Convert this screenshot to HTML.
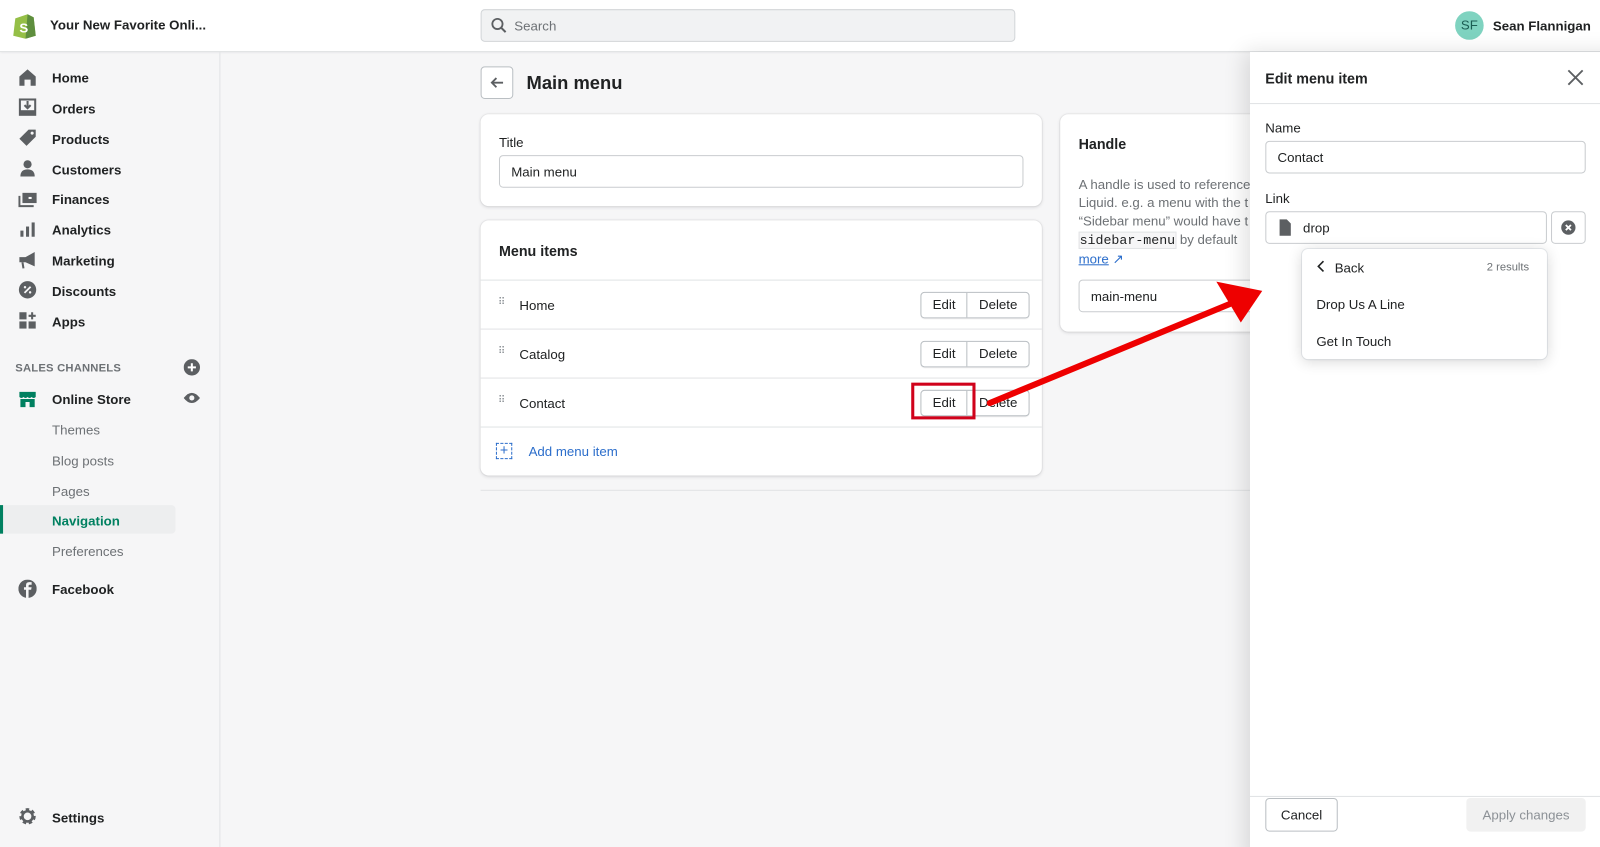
<!DOCTYPE html>
<html><head><meta charset="utf-8"><style>
*{box-sizing:border-box;margin:0;padding:0}
body{width:1600px;height:846px;overflow:hidden;background:#f6f6f7;font-family:"Liberation Sans",sans-serif;color:#202223;font-size:13px;position:relative}
#w{position:absolute;left:0;top:0;width:1568px;height:830px;transform:scale(1.020408);transform-origin:0 0;overflow:hidden}
.a{position:absolute}
.top{left:0;top:0;width:1568px;height:51px;background:#fff;border-bottom:1px solid #e1e3e5;box-shadow:0 1px 2px rgba(0,0,0,.08)}
.side{left:0;top:51px;width:216px;height:795px;border-right:1px solid #e1e3e5}
.nav{left:51px;font-size:13px;font-weight:bold;color:#202223}
.sub{left:51px;font-size:13px;color:#6d7175}
.ic{left:18px;width:18px;height:18px}
.card{background:#fff;border-radius:8px;box-shadow:0 0 0 1px rgba(63,63,68,.05),0 1px 3px rgba(63,63,68,.15)}
.inp{border:1px solid #c9cccf;border-radius:4px;background:#fff;padding-left:11px;display:flex;align-items:center;font-size:13px}
.btn{border:1px solid #babfc3;border-radius:4px;background:#fff;height:26px;display:flex;font-size:13px;box-shadow:0 1px 0 rgba(0,0,0,.05)}
.btn span{padding:0 11px;line-height:24px}
.btn span+span{border-left:1px solid #babfc3}
.row{left:471px;width:550px;height:48px;border-top:1px solid #e1e3e5}
</style></head><body><div id="w">
<div class="a top"></div>
<svg class="a" style="left:12px;top:11px" width="24" height="27" viewBox="0 0 24 27"><path d="M3 7 L15 3 L21 6 L23 24 L13 27 L1 24 Z" fill="#95bf47"/><path d="M15 3 L21 6 L23 24 L13 27 Z" fill="#5e8e3e"/><text x="7" y="21" font-size="13" font-weight="bold" fill="#fff" font-family="Liberation Sans">S</text></svg>
<div class="a" style="left:49px;top:17px;font-size:13px;font-weight:bold">Your New Favorite Onli...</div>
<div class="a" style="left:471px;top:9px;width:524px;height:32px;background:#f1f2f3;border:1px solid #d2d5d8;border-radius:4px"></div>
<svg class="a" style="left:481px;top:17px" width="16" height="16" viewBox="0 0 16 16"><circle cx="6.5" cy="6.5" r="5" fill="none" stroke="#5c5f62" stroke-width="1.8"/><path d="M10 10 L14.5 14.5" stroke="#5c5f62" stroke-width="2"/></svg>
<div class="a" style="left:504px;top:18px;color:#6d7175">Search</div>
<div class="a" style="left:1426px;top:11px;width:28px;height:28px;border-radius:50%;background:#7fd3c0;color:#1b5e53;font-size:13px;text-align:center;line-height:28px">SF</div>
<div class="a" style="left:1463px;top:18px;font-weight:bold;font-size:13px">Sean Flannigan</div>

<div class="a side"></div>
<svg class="a ic" style="top:67px" viewBox="0 0 18 18"><path d="M9 1 L17 8 V17 H12 V11 H6 V17 H1 V8 Z" fill="#5c5f62"/></svg>
<div class="a nav" style="top:69px">Home</div>
<svg class="a ic" style="top:96px" viewBox="0 0 18 18"><rect x="1.5" y="1.5" width="15" height="15" fill="none" stroke="#5c5f62" stroke-width="2"/><path d="M9 3 V10 M6 7 L9 10 L12 7" stroke="#5c5f62" stroke-width="2" fill="none"/><rect x="1" y="12" width="16" height="5" fill="#5c5f62"/></svg>
<div class="a nav" style="top:99px">Orders</div>
<svg class="a ic" style="top:126px" viewBox="0 0 18 18"><path d="M10 1 H17 V8 L8 17 L1 10 Z" fill="#5c5f62"/><circle cx="13.5" cy="4.5" r="1.5" fill="#f6f6f7"/></svg>
<div class="a nav" style="top:129px">Products</div>
<svg class="a ic" style="top:156px" viewBox="0 0 18 18"><circle cx="9" cy="5" r="4" fill="#5c5f62"/><path d="M2 17 Q2 10 9 10 Q16 10 16 17 Z" fill="#5c5f62"/></svg>
<div class="a nav" style="top:159px">Customers</div>
<svg class="a ic" style="top:186px" viewBox="0 0 18 18"><rect x="4" y="3" width="14" height="10" fill="#5c5f62"/><path d="M1 6 V16 H15" stroke="#5c5f62" stroke-width="2" fill="none"/><rect x="10" y="7" width="3" height="2" fill="#fff"/></svg>
<div class="a nav" style="top:188px">Finances</div>
<svg class="a ic" style="top:216px" viewBox="0 0 18 18"><rect x="2" y="10" width="3" height="6" fill="#5c5f62"/><rect x="7.5" y="6" width="3" height="10" fill="#5c5f62"/><rect x="13" y="2" width="3" height="14" fill="#5c5f62"/></svg>
<div class="a nav" style="top:218px">Analytics</div>
<svg class="a ic" style="top:246px" viewBox="0 0 18 18"><path d="M1 6 H7 L16 1 V15 L7 11 H1 Z" fill="#5c5f62"/><path d="M4 11 L5 17" stroke="#5c5f62" stroke-width="2"/></svg>
<div class="a nav" style="top:248px">Marketing</div>
<svg class="a ic" style="top:275px" viewBox="0 0 18 18"><circle cx="9" cy="9" r="8.5" fill="#5c5f62"/><path d="M6 12 L12 6" stroke="#f6f6f7" stroke-width="1.8"/><circle cx="6.5" cy="6.5" r="1.2" fill="#f6f6f7"/><circle cx="11.5" cy="11.5" r="1.2" fill="#f6f6f7"/></svg>
<div class="a nav" style="top:278px">Discounts</div>
<svg class="a ic" style="top:305px" viewBox="0 0 18 18"><rect x="1" y="1" width="7" height="7" fill="#5c5f62"/><rect x="1" y="10" width="7" height="7" fill="#5c5f62"/><rect x="10" y="10" width="7" height="7" fill="#5c5f62"/><path d="M13.5 1 V8 M10 4.5 H17" stroke="#5c5f62" stroke-width="2"/></svg>
<div class="a nav" style="top:308px">Apps</div>
<div class="a" style="left:15px;top:355px;font-size:11px;font-weight:bold;color:#6d7175;letter-spacing:.2px">SALES CHANNELS</div>
<svg class="a" style="left:180px;top:352px" width="16" height="16" viewBox="0 0 16 16"><circle cx="8" cy="8" r="8" fill="#5c5f62"/><path d="M8 4 V12 M4 8 H12" stroke="#fff" stroke-width="2"/></svg>
<svg class="a ic" style="top:382px" viewBox="0 0 18 18"><path d="M1 2 H17 L17 7 Q15 9 13 7 Q11 9 9 7 Q7 9 5 7 Q3 9 1 7 Z" fill="#008060"/><path d="M2 9 V17 H7 V12 H11 V17 H16 V9" fill="#008060"/></svg>
<div class="a nav" style="top:384px">Online Store</div>
<svg class="a" style="left:180px;top:384px" width="16" height="12" viewBox="0 0 16 12"><path d="M0 6 Q8 -4 16 6 Q8 16 0 6Z" fill="#5c5f62"/><circle cx="8" cy="6" r="2.5" fill="#f6f6f7"/></svg>
<div class="a sub" style="top:414px">Themes</div>
<div class="a sub" style="top:444px">Blog posts</div>
<div class="a sub" style="top:474px">Pages</div>
<div class="a" style="left:0;top:495px;width:172px;height:28px;background:#edeeef;border-radius:0 4px 4px 0"></div>
<div class="a" style="left:0;top:495px;width:3px;height:28px;background:#008060"></div>
<div class="a" style="left:51px;top:503px;font-weight:bold;color:#008060">Navigation</div>
<div class="a sub" style="top:533px">Preferences</div>
<svg class="a ic" style="top:568px" viewBox="0 0 18 18"><circle cx="9" cy="9" r="9" fill="#5c5f62"/><path d="M10 18 V10 H12.5 L13 7.5 H10 V6 Q10 5 11 5 H13 V2.5 H10.5 Q7.5 2.5 7.5 5.5 V7.5 H5.5 V10 H7.5 V18Z" fill="#f6f6f7"/></svg>
<div class="a nav" style="top:570px">Facebook</div>
<svg class="a ic" style="top:791px" viewBox="0 0 18 18"><circle cx="9" cy="9" r="6" fill="none" stroke="#5c5f62" stroke-width="4" stroke-dasharray="3 2.3"/><circle cx="9" cy="9" r="5" fill="none" stroke="#5c5f62" stroke-width="2.5"/></svg>
<div class="a nav" style="top:794px">Settings</div>

<div class="a" style="left:471px;top:65px;width:32px;height:32px;border:1px solid #babfc3;border-radius:4px;background:#fff"></div>
<svg class="a" style="left:479px;top:73px" width="16" height="16" viewBox="0 0 16 16"><path d="M14 8 H3 M7.5 3.5 L3 8 L7.5 12.5" stroke="#5c5f62" stroke-width="1.8" fill="none"/></svg>
<div class="a" style="left:516px;top:71px;font-size:18px;font-weight:bold;color:#202223">Main menu</div>
<div class="a card" style="left:471px;top:112px;width:550px;height:90px"></div>
<div class="a" style="left:489px;top:132px">Title</div>
<div class="a inp" style="left:489px;top:152px;width:514px;height:32px">Main menu</div>
<div class="a card" style="left:471px;top:216px;width:550px;height:250px"></div>
<div class="a" style="left:489px;top:238px;font-size:14px;font-weight:bold">Menu items</div>
<div class="a row" style="top:274px"></div>
<div class="a row" style="top:322px"></div>
<div class="a row" style="top:370px"></div>
<div class="a row" style="top:418px"></div>
<div class="a" style="left:488px;top:291px;color:#8c9196;font-size:10px">⠿</div><div class="a" style="left:509px;top:292px">Home</div>
<div class="a" style="left:488px;top:339px;color:#8c9196;font-size:10px">⠿</div><div class="a" style="left:509px;top:340px">Catalog</div>
<div class="a" style="left:488px;top:387px;color:#8c9196;font-size:10px">⠿</div><div class="a" style="left:509px;top:388px">Contact</div>
<div class="a btn" style="left:902px;top:286px"><span>Edit</span><span>Delete</span></div>
<div class="a btn" style="left:902px;top:334px"><span>Edit</span><span>Delete</span></div>
<div class="a btn" style="left:902px;top:382px"><span>Edit</span><span>Delete</span></div>
<div class="a" style="left:893px;top:375px;width:63px;height:36px;border:3px solid #d0021b"></div>
<div class="a" style="left:486px;top:434px;width:16px;height:16px;border:1.5px dashed #2c6ecb;color:#2c6ecb;font-size:14px;line-height:12px;text-align:center">+</div>
<div class="a" style="left:518px;top:435px;color:#2c6ecb">Add menu item</div>
<div class="a" style="left:471px;top:480px;width:760px;border-top:1px solid #e1e3e5"></div>
<div class="a card" style="left:1039px;top:112px;width:250px;height:213px"></div>
<div class="a" style="left:1057px;top:133px;font-size:14px;font-weight:bold">Handle</div>
<div class="a" style="left:1057px;top:172px;width:200px;color:#6d7175;line-height:18px;white-space:nowrap">A handle is used to reference<br>Liquid. e.g. a menu with the t<br>“Sidebar menu” would have t<br><span style="font-family:'Liberation Mono',monospace;border:1px solid #e1e3e5;background:#f6f6f7;color:#202223">sidebar-menu</span> by default<br><span style="color:#2c6ecb;text-decoration:underline">more</span> <span style="color:#2c6ecb">↗</span></div>
<div class="a inp" style="left:1057px;top:274px;width:220px;height:32px">main-menu</div>

<div class="a" style="left:1225px;top:51px;width:375px;height:795px;background:#fff;box-shadow:-6px 0 20px rgba(0,0,0,.12)"></div>
<div class="a" style="left:1240px;top:69px;font-size:14px;font-weight:bold">Edit menu item</div>
<svg class="a" style="left:1536px;top:68px" width="16" height="16" viewBox="0 0 16 16"><path d="M1 1 L15 15 M15 1 L1 15" stroke="#5c5f62" stroke-width="1.8"/></svg>
<div class="a" style="left:1225px;top:101px;width:375px;border-top:1px solid #e1e3e5"></div>
<div class="a" style="left:1240px;top:118px">Name</div>
<div class="a inp" style="left:1240px;top:138px;width:314px;height:32px">Contact</div>
<div class="a" style="left:1240px;top:187px">Link</div>
<div class="a inp" style="left:1240px;top:207px;width:276px;height:32px;padding-left:36px">drop</div>
<svg class="a" style="left:1253px;top:214px" width="13" height="18" viewBox="0 0 13 18"><path d="M1 1 H8 L12 5 V17 H1 Z" fill="#5c5f62"/></svg>
<div class="a" style="left:1520px;top:207px;width:34px;height:32px;border:1px solid #c9cccf;border-radius:4px"></div>
<svg class="a" style="left:1529px;top:215px" width="16" height="16" viewBox="0 0 16 16"><circle cx="8" cy="8" r="7" fill="#5c5f62"/><path d="M5.5 5.5 L10.5 10.5 M10.5 5.5 L5.5 10.5" stroke="#fff" stroke-width="1.8"/></svg>
<div class="a" style="left:1276px;top:244px;width:240px;height:108px;background:#fff;border-radius:6px;box-shadow:0 0 0 1px rgba(6,44,82,.08),0 2px 14px rgba(0,0,0,.16)"></div>
<svg class="a" style="left:1290px;top:255px" width="10" height="12" viewBox="0 0 10 12"><path d="M7 1 L2 6 L7 11" stroke="#202223" stroke-width="1.6" fill="none"/></svg>
<div class="a" style="left:1308px;top:255px">Back</div>
<div class="a" style="left:1457px;top:256px;font-size:11px;color:#6d7175">2 results</div>
<div class="a" style="left:1290px;top:291px">Drop Us A Line</div>
<div class="a" style="left:1290px;top:327px">Get In Touch</div>
<div class="a" style="left:1225px;top:780px;width:375px;border-top:1px solid #e1e3e5"></div>
<div class="a" style="left:1240px;top:782px;width:71px;height:33px;border:1px solid #babfc3;border-radius:4px;text-align:center;line-height:31px;font-size:13px">Cancel</div>
<div class="a" style="left:1437px;top:782px;width:117px;height:33px;background:#f1f1f1;border-radius:4px;text-align:center;line-height:33px;color:#8c9196">Apply changes</div>

<svg class="a" style="left:0;top:0" width="1600" height="846"><path d="M970 395 L1205 298" stroke="#e00" stroke-width="6" stroke-linecap="round"/><path d="M1237 285 L1192 276 L1216 316 Z" fill="#e00"/></svg>
</div></body></html>
